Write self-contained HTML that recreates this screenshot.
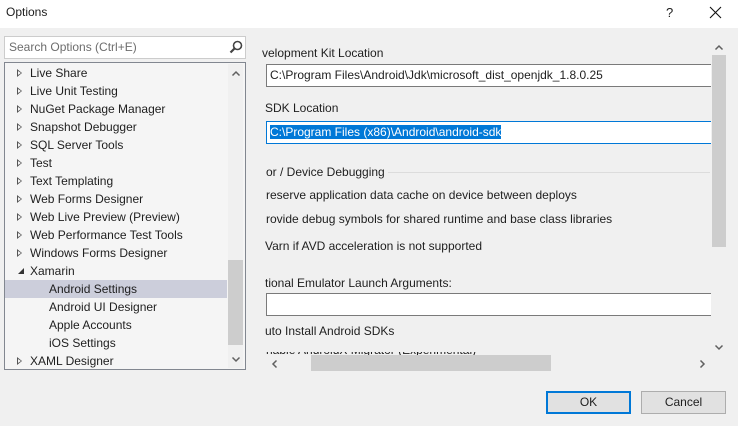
<!DOCTYPE html><html><head><style>
body{margin:0;width:738px;height:426px;background:#f0f0f0;font-family:"Liberation Sans",sans-serif;font-size:12px;color:#1e1e1e;position:relative;overflow:hidden}
.a{position:absolute;white-space:nowrap}
.row{position:absolute;left:5px;width:222px;height:18px;line-height:18px}
.tri{position:absolute;left:12px;top:5px;width:0;height:0;border-left:5px solid #555;border-top:4px solid transparent;border-bottom:4px solid transparent}
.tri::after{content:"";position:absolute;left:-4px;top:-2px;border-left:3px solid #f5f5f5;border-top:2px solid transparent;border-bottom:2px solid transparent}
.tb{position:absolute;left:266px;width:445px;height:21px;background:#fff;border:1px solid #7a7a7a;border-right:none;line-height:21px;padding-left:3px;box-sizing:border-box}
.btn{position:absolute;top:391px;width:85px;height:23px;background:#e1e1e1;border:1px solid #adadad;box-sizing:border-box;text-align:center;line-height:21px}
svg.a{overflow:visible}
</style></head><body>
<div class="a" style="left:0;top:0;width:738px;height:28px;background:#fff"></div>
<div class="a" style="left:6px;top:5px;font-size:12px">Options</div>
<div class="a" style="left:666px;top:5px;font-size:13px">?</div>
<svg class="a" style="left:710px;top:7px" width="11" height="11"><path d="M0 0L11 11M11 0L0 11" stroke="#111" stroke-width="1.1"/></svg>
<div class="a" style="left:4px;top:36px;width:242px;height:23px;background:#fff;border:1px solid #ccc;box-sizing:border-box;color:#6d6d6d;line-height:21px;padding-left:4px">Search Options (Ctrl+E)</div>
<svg class="a" style="left:229px;top:40px" width="14" height="14"><circle cx="8.5" cy="5.5" r="4" fill="none" stroke="#444" stroke-width="1.6"/><line x1="5.5" y1="8.5" x2="1.5" y2="12.5" stroke="#444" stroke-width="2.2"/></svg>
<div class="a" style="left:4px;top:62px;width:242px;height:308px;background:#f5f5f5;border:1px solid #828790;box-sizing:border-box"></div>
<div class="a" style="left:228px;top:64px;width:15px;height:304px;background:#f0f0f0"></div>
<div class="a" style="left:228px;top:260px;width:15px;height:85px;background:#cdcdcd"></div>
<svg class="a" style="left:232px;top:71px" width="8" height="5"><path d="M0.5 4.5L4 1L7.5 4.5" fill="none" stroke="#606060" stroke-width="1.5"/></svg>
<svg class="a" style="left:232px;top:357px" width="8" height="5"><path d="M0.5 0.5L4 4L7.5 0.5" fill="none" stroke="#606060" stroke-width="1.5"/></svg>
<div class="row" style="top:64px"><span class="tri"></span><span style="margin-left:25px">Live Share</span></div>
<div class="row" style="top:82px"><span class="tri"></span><span style="margin-left:25px">Live Unit Testing</span></div>
<div class="row" style="top:100px"><span class="tri"></span><span style="margin-left:25px">NuGet Package Manager</span></div>
<div class="row" style="top:118px"><span class="tri"></span><span style="margin-left:25px">Snapshot Debugger</span></div>
<div class="row" style="top:136px"><span class="tri"></span><span style="margin-left:25px">SQL Server Tools</span></div>
<div class="row" style="top:154px"><span class="tri"></span><span style="margin-left:25px">Test</span></div>
<div class="row" style="top:172px"><span class="tri"></span><span style="margin-left:25px">Text Templating</span></div>
<div class="row" style="top:190px"><span class="tri"></span><span style="margin-left:25px">Web Forms Designer</span></div>
<div class="row" style="top:208px"><span class="tri"></span><span style="margin-left:25px">Web Live Preview (Preview)</span></div>
<div class="row" style="top:226px"><span class="tri"></span><span style="margin-left:25px">Web Performance Test Tools</span></div>
<div class="row" style="top:244px"><span class="tri"></span><span style="margin-left:25px">Windows Forms Designer</span></div>
<div class="row" style="top:262px"><span style="position:absolute;left:13px;top:6px;width:0;height:0;border-right:6px solid #333;border-top:6px solid transparent"></span><span style="margin-left:25px">Xamarin</span></div>
<div class="row" style="top:280px;background:#cccedb"><span style="margin-left:44px">Android Settings</span></div>
<div class="row" style="top:298px"><span style="margin-left:44px">Android UI Designer</span></div>
<div class="row" style="top:316px"><span style="margin-left:44px">Apple Accounts</span></div>
<div class="row" style="top:334px"><span style="margin-left:44px">iOS Settings</span></div>
<div class="row" style="top:352px"><span class="tri"></span><span style="margin-left:25px">XAML Designer</span></div>

<div class="a" style="left:262px;top:46px">velopment Kit Location</div>
<div class="tb" style="top:64px;height:23px">C:\Program Files\Android\Jdk\microsoft_dist_openjdk_1.8.0.25</div>
<div class="a" style="left:265px;top:101px">SDK Location</div>
<div class="tb" style="top:121px;height:23px;border-color:#0078d7"><span style="background:#0078d7;color:#fff">C:\Program Files (x86)\Android\android-sdk</span></div>
<div class="a" style="left:266px;top:165px">or / Device Debugging</div>
<div class="a" style="left:388px;top:172px;width:322px;height:1px;background:#dcdcdc"></div>
<div class="a" style="left:266px;top:188px">reserve application data cache on device between deploys</div>
<div class="a" style="left:266px;top:212px">rovide debug symbols for shared runtime and base class libraries</div>
<div class="a" style="left:265px;top:239px">Varn if AVD acceleration is not supported</div>
<div class="a" style="left:265px;top:276px">tional Emulator Launch Arguments:</div>
<div class="tb" style="top:293px;height:23px"></div>
<div class="a" style="left:265px;top:324px">uto Install Android SDKs</div>
<div class="a" style="left:266px;top:352px;height:3px;overflow:hidden;width:220px"><span style="position:relative;top:-9px;display:block">nable AndroidX Migrator (Experimental)</span></div>
<div class="a" style="left:711px;top:38px;width:16px;height:317px;background:#f0f0f0"></div>
<div class="a" style="left:712px;top:55px;width:14px;height:192px;background:#cdcdcd"></div>
<svg class="a" style="left:715px;top:45px" width="8" height="5"><path d="M0.5 4.5L4 1L7.5 4.5" fill="none" stroke="#606060" stroke-width="1.5"/></svg>
<svg class="a" style="left:715px;top:345px" width="8" height="5"><path d="M0.5 0.5L4 4L7.5 0.5" fill="none" stroke="#606060" stroke-width="1.5"/></svg>
<div class="a" style="left:262px;top:355px;width:449px;height:16px;background:#f0f0f0"></div>
<div class="a" style="left:311px;top:355px;width:240px;height:16px;background:#cdcdcd"></div>
<svg class="a" style="left:272px;top:360px" width="5" height="8"><path d="M4.5 0.5L1 4L4.5 7.5" fill="none" stroke="#606060" stroke-width="1.5"/></svg>
<svg class="a" style="left:700px;top:360px" width="5" height="8"><path d="M0.5 0.5L4 4L0.5 7.5" fill="none" stroke="#606060" stroke-width="1.5"/></svg>

<div class="btn" style="left:546px;border:2px solid #0078d7;line-height:19px">OK</div>
<div class="btn" style="left:641px">Cancel</div>
</body></html>
